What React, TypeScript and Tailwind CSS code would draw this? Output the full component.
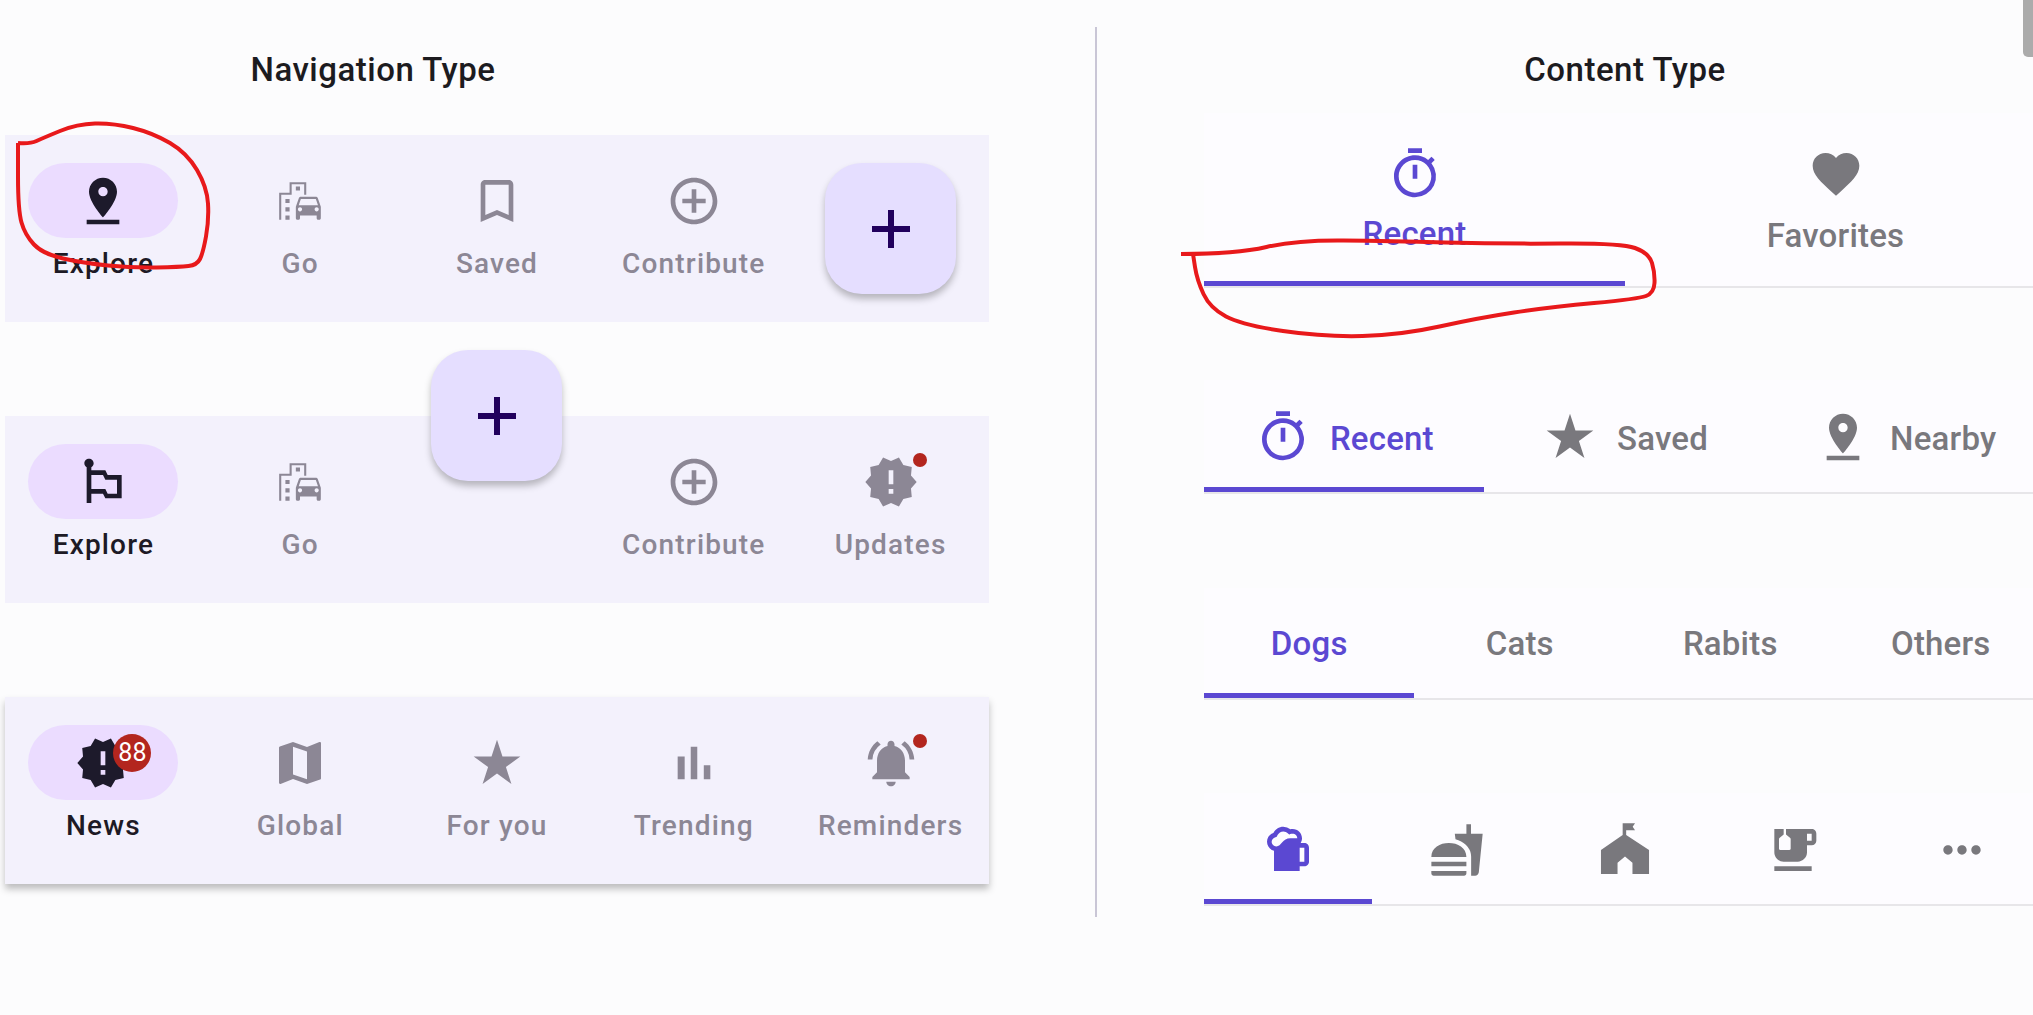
import type { ReactNode } from "react";
import {
  MdAddCircleOutline,
  MdBookmarkBorder,
  MdEmojiFoodBeverage,
  MdEmojiTransportation,
  MdFastfood,
  MdFavorite,
  MdMap,
  MdMoreHoriz,
  MdNewReleases,
  MdNotificationsActive,
  MdOutlineEmojiFlags,
  MdOutlineTimer,
  MdPinDrop,
  MdSportsBar,
} from "react-icons/md";

const ACTIVE = "#5b48d2";
const GRAY = "#79787d";

function smooth(points: number[][]) {
  let d = `M${points[0][0]} ${points[0][1]}`;
  for (let i = 1; i < points.length - 1; i++) {
    const [x, y] = points[i];
    const [nx, ny] = points[i + 1];
    d += ` Q${x} ${y} ${(x + nx) / 2} ${(y + ny) / 2}`;
  }
  const last = points[points.length - 1];
  return d + ` L${last[0]} ${last[1]}`;
}

const circleMark = [
  [18, 143], [30, 144], [43, 138], [77, 124], [113, 123], [153, 133], [187, 153], [207, 187],
  [209, 220], [203, 253], [197, 265], [180, 267], [133, 268], [83, 263], [43, 254], [25, 235],
  [18, 210], [18, 143],
];

const tabMark = [
  [1181, 254], [1236, 254], [1297, 240], [1390, 241], [1500, 244], [1621, 243], [1649, 253],
  [1655, 273], [1654, 293], [1638, 299], [1550, 307], [1478, 318], [1401, 335], [1324, 337],
  [1242, 325], [1210, 308], [1197, 280], [1193, 254],
];

function PlusFab() {
  return (
    <div className="flex h-[131px] w-[131px] items-center justify-center rounded-[37px] bg-[#e5deff] shadow-[0_5px_7px_rgba(0,0,0,0.25)]">
      <svg width="38" height="38" viewBox="0 0 38 38" fill="#21005d">
        <path d="M16 0h6v16h16v6H22v16h-6V22H0v-6h16z" />
      </svg>
    </div>
  );
}

function Glyph({ d, size = 56 }: { d: string; size?: number }) {
  return (
    <svg width={size} height={size} viewBox="0 0 24 24" fill="currentColor">
      <path d={d} />
    </svg>
  );
}

const STAR = "M12 2l2.35 7.24H22l-6.18 4.49 2.36 7.27L12 16.5 5.82 21l2.36-7.27L2 9.24h7.65z";
const BARS = "M5 9.2h3V19H5zM10.6 5h2.8v14h-2.8zm5.6 8H19v6h-2.8z";
const CHURCH = "M11 .5h5.3l-1 1.5 1 1.5h-3.8v2.1L22.3 12v10.3h-7.1V17.5L12 14.8l-3.2 2.7v4.8H1.7V12L11 5.6z";

function NavItem({
  icon,
  label,
  active,
  dot,
  badge,
}: {
  icon: ReactNode;
  label: string;
  active?: boolean;
  dot?: boolean;
  badge?: string;
}) {
  return (
    <div className="flex flex-col items-center pt-[28px]">
      <div
        className={
          active
            ? "relative flex h-[75px] w-[150px] items-center justify-center rounded-full bg-[#ebdcff] text-[#1d1a2b]"
            : "relative flex h-[75px] w-[150px] items-center justify-center text-[#8c8795]"
        }
      >
        {icon}
        {dot && <span className="absolute left-[97px] top-[9px] h-[14px] w-[14px] rounded-full bg-[#b3261e]" />}
        {badge && (
          <span className="absolute left-[85px] top-[9px] flex h-[38px] w-[38px] items-center justify-center rounded-full bg-[#b3261e] text-[25px] text-white">
            {badge}
          </span>
        )}
      </div>
      <span
        className={
          active
            ? "mt-[6px] text-[28px] leading-[40px] font-medium tracking-[1.17px] text-[#1d1a25]"
            : "mt-[6px] text-[28px] leading-[40px] font-medium tracking-[1.17px] text-[#8c8795]"
        }
      >
        {label}
      </span>
    </div>
  );
}

function Tabs({
  top,
  height,
  indicator,
  children,
}: {
  top: number;
  height: number;
  indicator: number;
  children: ReactNode;
}) {
  return (
    <div className="relative w-[842px] bg-[#fdfcff]" style={{ marginTop: top, height }}>
      <div className="flex h-full w-full border-b-2 border-[#e7e6e9] pt-[2px]">{children}</div>
      <div className="absolute bottom-[2px] left-0 h-[5px] bg-[#5b48d2]" style={{ width: indicator }} />
    </div>
  );
}

function StackTab({ icon, label, active }: { icon: ReactNode; label: string; active?: boolean }) {
  return (
    <div
      className="flex flex-1 flex-col items-center pt-[31px] text-[33px] leading-[40px] font-medium tracking-[0.2px]"
      style={{ color: active ? ACTIVE : GRAY }}
    >
      {icon}
      <span className={active ? "mt-[12px]" : "mt-[14px]"}>{label}</span>
    </div>
  );
}

function InlineTab({ icon, label, active }: { icon: ReactNode; label: string; active?: boolean }) {
  return (
    <div
      className="flex flex-1 items-center justify-center gap-[19px] text-[33px] font-medium tracking-[0.2px]"
      style={{ color: active ? ACTIVE : GRAY }}
    >
      {icon}
      <span className="pt-[4px]">{label}</span>
    </div>
  );
}

function TextTab({ label, active }: { label: string; active?: boolean }) {
  return (
    <div
      className="flex flex-1 items-center justify-center text-[33px] font-medium tracking-[0.2px]"
      style={{ color: active ? ACTIVE : GRAY }}
    >
      {label}
    </div>
  );
}

function IconTab({ icon, active }: { icon: ReactNode; active?: boolean }) {
  return (
    <div className="flex flex-1 items-center justify-center" style={{ color: active ? ACTIVE : GRAY }}>
      {icon}
    </div>
  );
}

export default function App() {
  return (
    <div className="relative flex h-screen w-full items-start overflow-hidden bg-[#fcfcfd] font-['Roboto',sans-serif]">
      {/* Navigation */}
      <div className="w-[1095px] shrink-0 pl-[5px]">
        <div className="flex w-[984px] flex-col">
          <h2 className="mt-[48px] mb-[43px] w-[736px] text-center text-[33px] leading-[44px] font-medium tracking-[0.5px] text-[#1c1b1f]">
            Navigation Type
          </h2>
          <div className="flex flex-col gap-[94px]">
            <div className="grid h-[187px] grid-cols-5 bg-[#f3f1fc]">
              <NavItem active icon={<MdPinDrop size={56} />} label="Explore" />
              <NavItem icon={<MdEmojiTransportation size={50} />} label="Go" />
              <NavItem icon={<MdBookmarkBorder size={56} />} label="Saved" />
              <NavItem icon={<MdAddCircleOutline size={56} />} label="Contribute" />
              <div className="flex justify-center pt-[28px]">
                <PlusFab />
              </div>
            </div>

            <div className="grid h-[187px] grid-cols-5 bg-[#f3f1fc]">
              <NavItem active icon={<MdOutlineEmojiFlags size={56} />} label="Explore" />
              <NavItem icon={<MdEmojiTransportation size={50} />} label="Go" />
              <div className="relative flex justify-center">
                <div className="absolute -top-[66px]">
                  <PlusFab />
                </div>
              </div>
              <NavItem icon={<MdAddCircleOutline size={56} />} label="Contribute" />
              <NavItem dot icon={<MdNewReleases size={56} />} label="Updates" />
            </div>

            <div className="grid h-[187px] grid-cols-5 bg-[#f3f1fc] shadow-[0_5px_7px_rgba(0,0,0,0.25)]">
              <NavItem active badge="88" icon={<MdNewReleases size={56} />} label="News" />
              <NavItem icon={<MdMap size={56} />} label="Global" />
              <NavItem icon={<Glyph d={STAR} />} label="For you" />
              <NavItem icon={<Glyph d={BARS} />} label="Trending" />
              <NavItem dot icon={<MdNotificationsActive size={56} />} label="Reminders" />
            </div>
          </div>
        </div>
      </div>

      <div className="mt-[27px] h-[890px] w-[2px] shrink-0 bg-[#c9c6d6]" />

      {/* Content */}
      <div className="ml-[107px] w-[842px] shrink-0">
        <h2 className="mt-[48px] text-center text-[33px] leading-[44px] font-medium tracking-[0.5px] text-[#1c1b1f]">
          Content Type
        </h2>
        <Tabs top={21} height={175} indicator={421}>
          <StackTab active icon={<MdOutlineTimer size={56} />} label="Recent" />
          <StackTab icon={<MdFavorite size={56} />} label="Favorites" />
        </Tabs>
        <Tabs top={92} height={114} indicator={280}>
          <InlineTab active icon={<MdOutlineTimer size={56} />} label="Recent" />
          <InlineTab icon={<Glyph d={STAR} />} label="Saved" />
          <InlineTab icon={<MdPinDrop size={56} />} label="Nearby" />
        </Tabs>
        <Tabs top={94} height={112} indicator={210}>
          <TextTab active label="Dogs" />
          <TextTab label="Cats" />
          <TextTab label="Rabits" />
          <TextTab label="Others" />
        </Tabs>
        <Tabs top={93} height={113} indicator={168}>
          <IconTab active icon={<MdSportsBar size={56} />} />
          <IconTab icon={<MdFastfood size={56} />} />
          <IconTab icon={<Glyph d={CHURCH} />} />
          <IconTab icon={<MdEmojiFoodBeverage size={56} />} />
          <IconTab icon={<MdMoreHoriz size={56} />} />
        </Tabs>
      </div>

      {/* scrollbar thumb */}
      <div className="absolute top-0 right-0 h-[57px] w-[10px] rounded-bl-[5px] bg-[#ababab]" />

      {/* red pen marks drawn over the screenshot */}
      <svg className="pointer-events-none absolute top-0 left-0" width="2033" height="1015" fill="none">
        <path d={smooth(circleMark)} stroke="#e8191b" strokeWidth="4" strokeLinejoin="round" />
        <path d={smooth(tabMark)} stroke="#e8191b" strokeWidth="4" strokeLinejoin="round" />
      </svg>
    </div>
  );
}
